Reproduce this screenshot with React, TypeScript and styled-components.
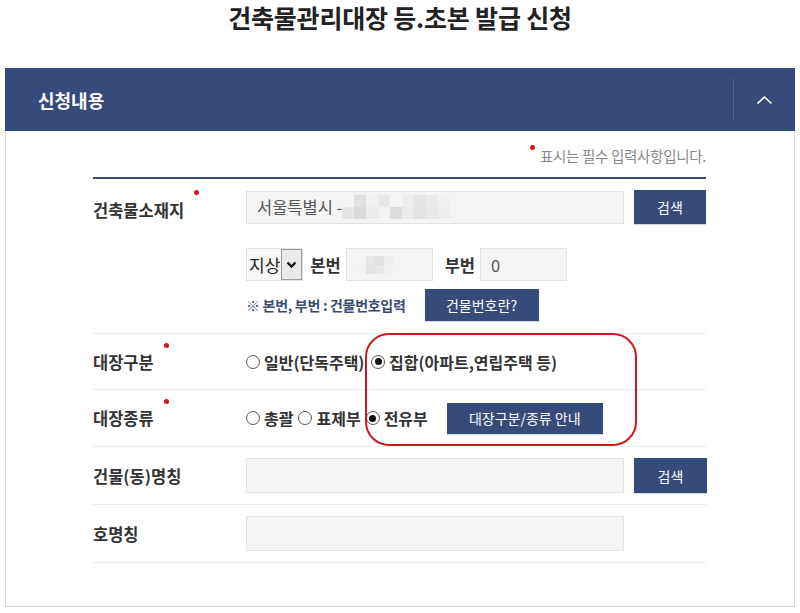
import React from 'react'
import styled, { createGlobalStyle } from 'styled-components'

const NAVY = '#354c7a'

const GlobalStyle = createGlobalStyle`
  html, body {
    margin: 0;
    padding: 0;
    background: #fff;
  }
  body {
    font-family: 'Noto Sans CJK KR', 'Noto Sans', sans-serif;
    color: #333;
  }
`

const Page = styled.div`
  width: 800px;
  height: 613px;
  overflow: hidden;
`
const Title = styled.h1`
  margin: 0;
  height: 68px;
  padding-top: 0;
  box-sizing: border-box;
  text-align: center;
  font-size: 25px;
  line-height: 34px;
  font-weight: 700;
  color: #222;
  letter-spacing: -0.2px;
`
const Panel = styled.section`
  margin-left: 5px;
  width: 790px;
`
const PanelHeader = styled.div`
  display: flex;
  align-items: center;
  height: 63px;
  background: ${NAVY};
`
const PanelTitle = styled.h2`
  flex: 1;
  margin: 0;
  padding-left: 33px;
  font-size: 18px;
  font-weight: 700;
  color: #fff;
`
const ToggleButton = styled.div`
  display: flex;
  align-items: center;
  justify-content: center;
  width: 61px;
  height: 43px;
  border-left: 1px solid rgba(255, 255, 255, 0.12);
`
const PanelBody = styled.div`
  border: 1px solid #d9d9d9;
  border-top: none;
  height: 476px;
  box-sizing: border-box;
  padding: 15px 0 0 87px;
`
const Content = styled.div`
  position: relative;
  width: 613px;
`
const Note = styled.p`
  margin: 0 0 11px;
  text-align: right;
  font-size: 14.5px;
  line-height: 20px;
  color: #888;
  letter-spacing: -0.3px;
`
const RequiredDot = styled.span<{ $raise?: number; $gap?: number }>`
  display: inline-block;
  width: 5px;
  height: 5px;
  border-radius: 50%;
  background: #d4111b;
  margin: 0 ${(p) => p.$gap ?? 5}px 0 ${(p) => p.$gap ?? 0}px;
  vertical-align: top;
  position: relative;
  top: ${(p) => -(p.$raise ?? 0)}px;
`
const Table = styled.div`
  border-top: 2px solid #3d4b66;
`
const Row = styled.div<{ $height: number; $top?: number }>`
  display: flex;
  align-items: ${(p) => (p.$top ? 'flex-start' : 'center')};
  min-height: ${(p) => p.$height}px;
  padding-top: ${(p) => p.$top ?? 0}px;
  box-sizing: border-box;
  border-bottom: 1px solid #ececec;
`
const Label = styled.div<{ $offset?: number }>`
  width: 153px;
  flex: none;
  font-size: 16.5px;
  font-weight: 700;
  color: #333;
  margin-top: ${(p) => p.$offset ?? 0}px;
`
const Field = styled.div`
  display: flex;
  flex-direction: column;
`
const Line = styled.div<{ $gap?: number }>`
  display: flex;
  align-items: center;
  gap: ${(p) => p.$gap ?? 10}px;
`
const TextBox = styled.div<{ $width: number; $height?: number }>`
  display: flex;
  align-items: center;
  width: ${(p) => p.$width}px;
  height: ${(p) => p.$height ?? 33}px;
  box-sizing: border-box;
  padding-left: 10px;
  background: #f4f4f4;
  border: 1px solid #e3e3e3;
  font-size: 16.5px;
  color: #555;
  font-family: 'Noto Sans CJK KR', 'Liberation Sans', sans-serif;
`
const Button = styled.div<{ $width: number; $height?: number; $size?: number }>`
  display: flex;
  align-items: center;
  justify-content: center;
  width: ${(p) => p.$width}px;
  height: ${(p) => p.$height ?? 33}px;
  background: ${NAVY};
  color: #fff;
  font-size: ${(p) => p.$size ?? 14}px;
  box-shadow: 0 1px 1px rgba(0, 0, 0, 0.15);
`
const Select = styled.div`
  display: flex;
  align-items: stretch;
  height: 33px;
  box-sizing: border-box;
  border: 1px solid #e3e3e3;
  background: #f7f7f7;
`
const SelectValue = styled.span`
  display: flex;
  align-items: center;
  padding: 0 1px 0 2px;
  font-size: 17px;
  color: #222;
`
const SelectArrow = styled.span`
  display: flex;
  align-items: center;
  justify-content: center;
  width: 19px;
  background: #e9e9e9;
  border: 1px solid #9a9a9a;
`
const InlineLabel = styled.span`
  font-size: 16.5px;
  font-weight: 700;
  color: #333;
`
const Hint = styled.span`
  font-size: 14px;
  font-weight: 700;
  color: #3a4c70;
  letter-spacing: -0.3px;
`
const Mosaic = styled.span<{ $cols: number; $size: number }>`
  display: grid;
  grid-template-columns: repeat(${(p) => p.$cols}, ${(p) => p.$size}px);
  grid-auto-rows: ${(p) => p.$size}px;
`
const MosaicCell = styled.span<{ $shade: string }>`
  background: ${(p) => p.$shade};
`
const Options = styled.div`
  display: flex;
  align-items: center;
  gap: 5px;
`
const Option = styled.label<{ $clip?: number }>`
  display: flex;
  align-items: center;
  gap: 4px;
  font-size: 16px;
  font-weight: 700;
  color: #333;
  white-space: nowrap;
  ${(p) => (p.$clip ? `width: ${p.$clip}px; overflow: hidden;` : '')}
`
const RadioMark = styled.span<{ $checked?: boolean }>`
  position: relative;
  flex: none;
  width: 14px;
  height: 14px;
  box-sizing: border-box;
  border-radius: 50%;
  border: 1px solid #555;
  background: #fff;
  &::after {
    content: '';
    display: ${(p) => (p.$checked ? 'block' : 'none')};
    position: absolute;
    left: 2.5px;
    top: 2.5px;
    width: 7px;
    height: 7px;
    border-radius: 50%;
    background: #111;
  }
`
const Highlight = styled.div`
  position: absolute;
  left: 272px;
  top: 187px;
  width: 272px;
  height: 113px;
  box-sizing: border-box;
  border: 2px solid #c91a22;
  border-radius: 24px;
  pointer-events: none;
`

const addressBlur = [
  ['#f4f4f4', '#e0e0e0', '#f2f2f2', '#e8e8e8', '#f4f4f4', '#ededed', '#e6e6e6', '#ebebeb', '#f1f1f1'],
  ['#e6e6e6', '#dadada', '#ececec', '#f3f3f3', '#dcdcdc', '#ebebeb', '#e3e3e3', '#e9e9e9', '#eeeeee'],
]
const numberBlur = [
  ['#f4f4f4', '#e6e6e6', '#e0e0e0', '#eeeeee'],
  ['#f2f2f2', '#e4e4e4', '#e8e8e8', '#f1f1f1'],
]

const Blur = ({ rows, size }: { rows: string[][]; size: number }) => (
  <Mosaic $cols={rows[0].length} $size={size}>
    {rows.flat().map((shade, i) => (
      <MosaicCell key={i} $shade={shade} />
    ))}
  </Mosaic>
)

const Radio = ({ label, checked, clip }: { label: string; checked?: boolean; clip?: number }) => (
  <Option $clip={clip}>
    <RadioMark $checked={checked} />
    {label}
  </Option>
)

const ChevronUp = () => (
  <svg width='17' height='10' viewBox='0 0 17 10'>
    <polyline points='1.5,8.5 8.5,2 15.5,8.5' fill='none' stroke='#fff' strokeWidth='1.6' />
  </svg>
)

const ChevronDown = () => (
  <svg width='11' height='8' viewBox='0 0 11 8'>
    <polyline points='1.5,1.5 5.5,5.5 9.5,1.5' fill='none' stroke='#111' strokeWidth='2.4' />
  </svg>
)

const App = () => (
  <Page>
    <GlobalStyle />
    <Title>건축물관리대장 등.초본 발급 신청</Title>
    <Panel>
      <PanelHeader>
        <PanelTitle>신청내용</PanelTitle>
        <ToggleButton>
          <ChevronUp />
        </ToggleButton>
      </PanelHeader>
      <PanelBody>
        <Content>
          <Note>
            <RequiredDot $raise={1} $gap={5} />
            표시는 필수 입력사항입니다.
          </Note>
          <Table>
            <Row $height={155} $top={11}>
              <Label $offset={8}>
                건축물소재지
                <RequiredDot $raise={8} $gap={10} />
              </Label>
              <Field>
                <Line>
                  <TextBox $width={378}>
                    서울특별시 -
                    <Blur rows={addressBlur} size={12} />
                  </TextBox>
                  <Button $width={72} $height={34}>
                    검색
                  </Button>
                </Line>
                <Line $gap={0} style={{ marginTop: 24 }}>
                  <Select>
                    <SelectValue>지상</SelectValue>
                    <SelectArrow>
                      <ChevronDown />
                    </SelectArrow>
                  </Select>
                  <InlineLabel style={{ margin: '0 5px 0 7px' }}>본번</InlineLabel>
                  <TextBox $width={87}>
                    <Blur rows={numberBlur} size={9} />
                  </TextBox>
                  <InlineLabel style={{ margin: '0 5px 0 12px' }}>부번</InlineLabel>
                  <TextBox $width={87}>0</TextBox>
                </Line>
                <Line $gap={19} style={{ marginTop: 8 }}>
                  <Hint>※ 본번, 부번 : 건물번호입력</Hint>
                  <Button $width={114} $height={32}>
                    건물번호란?
                  </Button>
                </Line>
              </Field>
            </Row>
            <Row $height={56}>
              <Label>
                대장구분
                <RequiredDot $raise={7} $gap={10} />
              </Label>
              <Options>
                <Radio label='일반(단독주택)' clip={120} />
                <Radio label='집합(아파트,연립주택 등)' checked />
              </Options>
            </Row>
            <Row $height={57}>
              <Label>
                대장종류
                <RequiredDot $raise={7} $gap={10} />
              </Label>
              <Options>
                <Radio label='총괄' />
                <Radio label='표제부' />
                <Radio label='전유부' checked />
                <Button $width={156} $height={31} style={{ marginLeft: 14 }}>
                  대장구분/종류 안내
                </Button>
              </Options>
            </Row>
            <Row $height={58}>
              <Label>건물(동)명칭</Label>
              <Line>
                <TextBox $width={378} $height={35} />
                <Button $width={73} $height={35}>
                  검색
                </Button>
              </Line>
            </Row>
            <Row $height={58}>
              <Label>호명칭</Label>
              <TextBox $width={378} $height={35} />
            </Row>
          </Table>
          <Highlight />
        </Content>
      </PanelBody>
    </Panel>
  </Page>
)

export default App
